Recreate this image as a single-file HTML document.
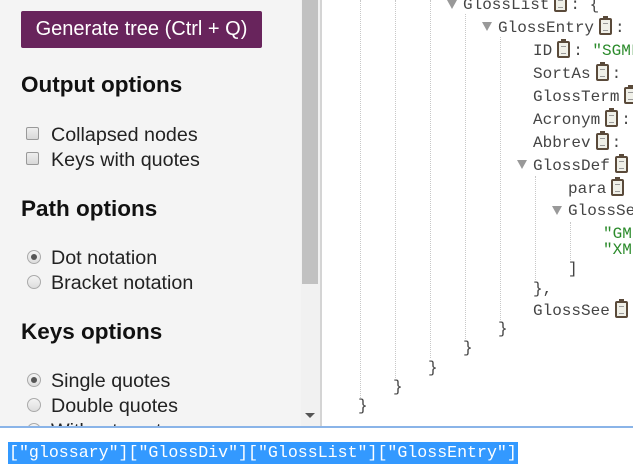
<!DOCTYPE html>
<html><head><meta charset="utf-8"><style>
*{margin:0;padding:0;box-sizing:border-box}
html,body{width:633px;height:474px;overflow:hidden}
body{background:#fff;font-family:"Liberation Sans",sans-serif;position:relative}
#left{position:absolute;left:0;top:0;width:301px;height:426px;background:#f4f4f4;overflow:hidden}
#track{position:absolute;left:301px;top:0;width:19px;height:426px;background:#f1f1f1}
#thumb{position:absolute;left:302px;top:0;width:16px;height:284px;background:#c1c1c1}
#sep{position:absolute;left:320px;top:0;width:2px;height:426px;background:#d4d4d4}
#right{position:absolute;left:322px;top:0;width:311px;height:426px;overflow:hidden}
.btn{position:absolute;left:21px;top:11px;width:241px;height:37px;background:#68245c;color:#fff;font-size:20px;line-height:37px;text-align:center;border-radius:2px}
h2{position:absolute;left:21px;font-size:22.5px;font-weight:bold;color:#111}
.opt{position:absolute;left:51px;font-size:19.7px;color:#222;line-height:22px}
.cb{position:absolute;left:26px;width:13px;height:13px;border:1px solid #999;background:linear-gradient(#eee,#d8d8d8);border-radius:2px}
.rd{position:absolute;left:27px;width:14px;height:14px;border:1px solid #aaa;background:linear-gradient(#f4f4f4,#ddd);border-radius:50%}
.rd.on::after{content:"";position:absolute;left:3px;top:3px;width:6px;height:6px;border-radius:50%;background:#555}
.t{position:absolute;font-family:"Liberation Mono",monospace;font-size:16px;color:#444;white-space:nowrap;line-height:18px}
.s{color:#2a8a2a}
.g{position:absolute;width:0;border-left:1px dotted #c8c8c8}
.tri{position:absolute;width:0;height:0;border-left:5px solid transparent;border-right:5px solid transparent;border-top:9px solid #999}
.ic{display:inline-block;width:13px;height:17px;border:2px solid #5a4a3a;border-radius:2px;background:#f0f0e8;vertical-align:-3px;margin:0 3px 0 5px;position:relative}
.ic::before{content:"";position:absolute;left:2px;top:-4px;width:5px;height:3px;background:#5a4a3a}
.ic::after{content:"";position:absolute;left:2px;top:3px;width:5px;height:6px;border-top:1px solid #999;border-bottom:1px solid #999}
#bot{position:absolute;left:0;top:426px;width:633px;height:48px;background:#fff;border-top:2px solid #8ab4e8}
#sel{position:absolute;left:8px;top:442px;height:22px;background:#3399ff;color:#fff;font-family:"Liberation Mono",monospace;font-size:16.6px;line-height:22px;white-space:nowrap;padding:0 1px}
</style></head><body>
<div id="left">
<div class="btn">Generate tree (Ctrl + Q)</div>
<h2 style="top:72px">Output options</h2>
<div class="cb" style="top:127px"></div><div class="opt" style="top:124px">Collapsed nodes</div>
<div class="cb" style="top:152px"></div><div class="opt" style="top:149px">Keys with quotes</div>
<h2 style="top:196px">Path options</h2>
<div class="rd on" style="top:250px"></div><div class="opt" style="top:247px">Dot notation</div>
<div class="rd" style="top:275px"></div><div class="opt" style="top:272px">Bracket notation</div>
<h2 style="top:319px">Keys options</h2>
<div class="rd on" style="top:373px"></div><div class="opt" style="top:370px">Single quotes</div>
<div class="rd" style="top:398px"></div><div class="opt" style="top:395px">Double quotes</div>
<div class="rd" style="top:423px"></div><div class="opt" style="top:420px">Without quotes</div>
</div>
<div id="track"></div><div id="thumb"></div>
<div style="position:absolute;left:305px;top:413px;width:0;height:0;border-left:5px solid transparent;border-right:5px solid transparent;border-top:5px solid #555"></div>
<div id="sep"></div>

<div id="right">
<div style="position:absolute;left:-322px;top:0;width:955px;height:426px">
<div class="g" style="left:360px;top:0;height:398px"></div>
<div class="g" style="left:395px;top:0;height:378px"></div>
<div class="g" style="left:430px;top:0;height:358px"></div>
<div class="g" style="left:465px;top:14px;height:325px"></div>
<div class="g" style="left:500px;top:37px;height:283px"></div>
<div class="g" style="left:535px;top:176px;height:104px"></div>
<div class="g" style="left:570px;top:222px;height:38px"></div>

<div class="tri" style="left:447px;top:0px"></div>
<div class="t" style="left:463px;top:-5px">GlossList<span class="ic"></span>: {</div>
<div class="tri" style="left:482px;top:22px"></div>
<div class="t" style="left:498px;top:18px">GlossEntry<span class="ic"></span>:</div>
<div class="t" style="left:533px;top:41px">ID<span class="ic"></span>: <span class="s">"SGML"</span></div>
<div class="t" style="left:533px;top:64px">SortAs<span class="ic"></span>:</div>
<div class="t" style="left:533px;top:87px">GlossTerm<span class="ic"></span></div>
<div class="t" style="left:533px;top:110px">Acronym<span class="ic"></span>:</div>
<div class="t" style="left:533px;top:133px">Abbrev<span class="ic"></span>:</div>
<div class="tri" style="left:517px;top:160px"></div>
<div class="t" style="left:533px;top:156px">GlossDef<span class="ic"></span></div>
<div class="t" style="left:568px;top:179px">para<span class="ic"></span></div>
<div class="tri" style="left:552px;top:206px"></div>
<div class="t" style="left:568px;top:202px">GlossSeeAlso</div>
<div class="t s" style="left:603px;top:225px">"GML"</div>
<div class="t s" style="left:603px;top:241px">"XML"</div>
<div class="t" style="left:568px;top:260px">]</div>
<div class="t" style="left:533px;top:280px">},</div>
<div class="t" style="left:533px;top:301px">GlossSee<span class="ic"></span></div>
<div class="t" style="left:498px;top:320px">}</div>
<div class="t" style="left:463px;top:339px">}</div>
<div class="t" style="left:428px;top:359px">}</div>
<div class="t" style="left:393px;top:378px">}</div>
<div class="t" style="left:358px;top:397px">}</div>
</div>
</div>

<div id="bot"></div>
<div id="sel">["glossary"]["GlossDiv"]["GlossList"]["GlossEntry"]</div>
</body></html>
